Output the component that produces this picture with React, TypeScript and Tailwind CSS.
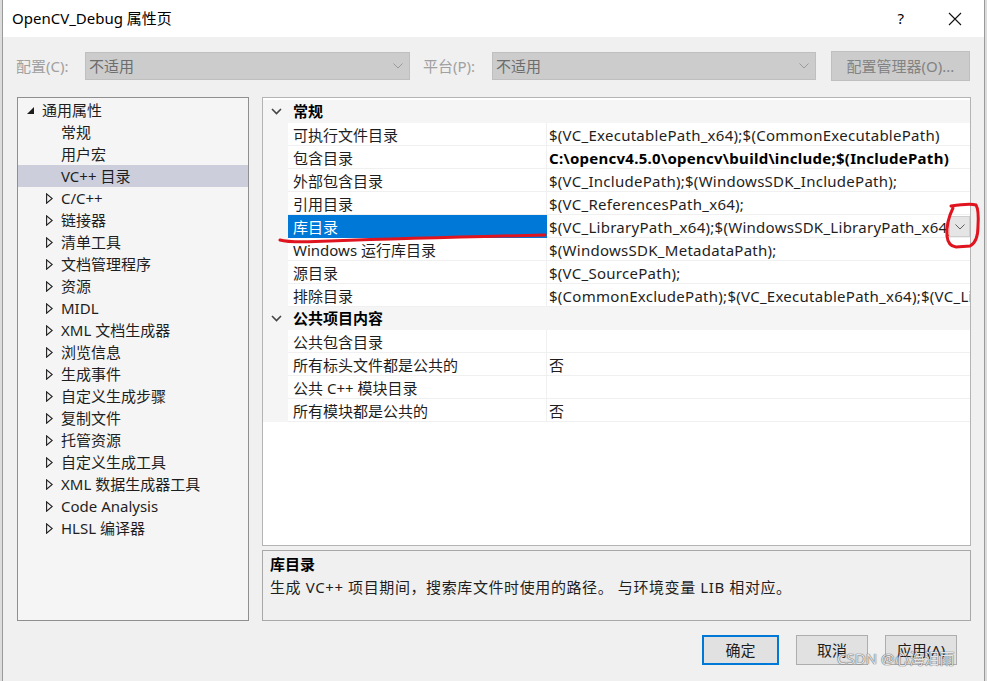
import React from "react";

const FONT = '"Noto Sans", "Noto Sans CJK SC", sans-serif';

type Prop = { name: string; value: string; bold?: boolean; selected?: boolean };

const general: Prop[] = [
  { name: "可执行文件目录", value: "$(VC_ExecutablePath_x64);$(CommonExecutablePath)" },
  { name: "包含目录", value: "C:\\opencv4.5.0\\opencv\\build\\include;$(IncludePath)", bold: true },
  { name: "外部包含目录", value: "$(VC_IncludePath);$(WindowsSDK_IncludePath);" },
  { name: "引用目录", value: "$(VC_ReferencesPath_x64);" },
  { name: "库目录", value: "$(VC_LibraryPath_x64);$(WindowsSDK_LibraryPath_x64)", selected: true },
  { name: "Windows 运行库目录", value: "$(WindowsSDK_MetadataPath);" },
  { name: "源目录", value: "$(VC_SourcePath);" },
  { name: "排除目录", value: "$(CommonExcludePath);$(VC_ExecutablePath_x64);$(VC_LibraryPath_x64);" },
];

const shared: Prop[] = [
  { name: "公共包含目录", value: "" },
  { name: "所有标头文件都是公共的", value: "否" },
  { name: "公共 C++ 模块目录", value: "" },
  { name: "所有模块都是公共的", value: "否" },
];

const collapsed = [
  "C/C++",
  "链接器",
  "清单工具",
  "文档管理程序",
  "资源",
  "MIDL",
  "XML 文档生成器",
  "浏览信息",
  "生成事件",
  "自定义生成步骤",
  "复制文件",
  "托管资源",
  "自定义生成工具",
  "XML 数据生成器工具",
  "Code Analysis",
  "HLSL 编译器",
];

function Chevron({ className = "", color = "#9a9a9a" }: { className?: string; color?: string }) {
  return (
    <svg width="10" height="6" viewBox="0 0 10 6" className={className}>
      <path d="M0.5 0.5 L5 5 L9.5 0.5" fill="none" stroke={color} strokeWidth="1" />
    </svg>
  );
}

function Combo({ width }: { width: string }) {
  return (
    <div className={`${width} h-[28px] bg-[#cccccc] border border-[#bfbfbf] flex items-center justify-between pl-[3px] pr-[6px]`}>
      <span className="text-[15px] text-[#6d6d6d] leading-none">不适用</span>
      <Chevron />
    </div>
  );
}

function Category({ label }: { label: string }) {
  return (
    <div className="flex h-[23px] bg-[#f5f5f5] items-center">
      <div className="w-[25px] flex justify-center pl-[2px]">
        <svg width="11" height="7" viewBox="0 0 11 7">
          <path d="M1 1 L5.5 5.5 L10 1" fill="none" stroke="#444" strokeWidth="1.6" />
        </svg>
      </div>
      <span className="pl-[5px] text-[15px] font-bold text-black leading-none">{label}</span>
    </div>
  );
}

function Row({ p }: { p: Prop }) {
  return (
    <div className="flex h-[23px]">
      <div className="w-[25px] shrink-0 bg-[#f5f5f5]" />
      <div
        className={`w-[259px] shrink-0 flex items-center pl-[5px] pt-[2px] border-b border-r ${
          p.selected ? "bg-[#0078d7] text-white border-[#0078d7]" : "bg-white text-[#1e1e1e] border-[#f0f0f0]"
        }`}
      >
        <span className="text-[15px] leading-none whitespace-nowrap">{p.name}</span>
      </div>
      <div className="flex-1 min-w-0 flex items-center bg-white border-b border-[#f0f0f0] pl-[2px] pt-[2px] relative overflow-hidden">
        <span
          className={`text-[15px] leading-none whitespace-nowrap tracking-[0.27px] text-[#1e1e1e] ${
            p.bold ? "font-bold text-black" : ""
          }`}
        >
          {p.value}
        </span>
        {p.selected && (
          <div className="absolute right-0 top-[1px] w-[21px] h-[21px] bg-[#e5e5e5] border border-[#cfcfcf] flex items-center justify-center">
            <Chevron color="#606060" />
          </div>
        )}
      </div>
    </div>
  );
}

function Button({ label, primary }: { label: string; primary?: boolean }) {
  return (
    <div
      className={`h-[30px] flex items-center justify-center bg-[#e1e1e1] text-[15px] text-[#1e1e1e] ${
        primary ? "w-[77px] border-2 border-[#0078d7]" : "w-[72px] border border-[#adadad]"
      }`}
    >
      {label}
    </div>
  );
}

export default function App() {
  return (
    <div className="w-[987px] h-[681px] bg-[#dcdcdc] relative overflow-hidden" style={{ fontFamily: FONT }}>
      <div className="ml-[2px] w-[983px] h-[681px] border-l border-r border-[#9a9a9a] bg-[#f0f0f0] flex flex-col">
        {/* Title bar */}
        <div className="h-[37px] bg-white flex items-center justify-between pl-[9px] pr-[22px] shrink-0">
          <span className="text-[15px] text-black leading-none">OpenCV_Debug 属性页</span>
          <div className="flex items-center gap-[44px]">
            <span className="text-[15px] text-black leading-none">?</span>
            <svg width="14" height="14" viewBox="0 0 14 14">
              <path d="M1 1 L13 13 M13 1 L1 13" stroke="#111" strokeWidth="1.1" />
            </svg>
          </div>
        </div>

        {/* Configuration row */}
        <div className="flex items-center mt-[15px] h-[28px] pl-[13px]">
          <span className="w-[69px] text-[15px] text-[#a0a0a0] leading-none">配置(C):</span>
          <Combo width="w-[325px]" />
          <span className="ml-[13px] w-[69px] text-[15px] text-[#a0a0a0] leading-none">平台(P):</span>
          <Combo width="w-[324px]" />
          <div className="ml-[15px] w-[139px] h-[30px] bg-[#cccccc] border border-[#bfbfbf] flex items-center justify-center text-[15px] text-[#838383]">
            配置管理器(O)...
          </div>
        </div>

        {/* Main area */}
        <div className="flex mt-[17px] pl-[14px]">
          {/* Tree */}
          <div className="w-[232px] h-[524px] bg-[#f5f5f5] border border-[#8f8f8f] pt-[1px] flex flex-col">
            <div className="h-[22px] flex items-center pl-[9px]">
              <svg width="7" height="7" viewBox="0 0 7 7">
                <path d="M7 0 L7 7 L0 7 Z" fill="#1e1e1e" />
              </svg>
              <span className="ml-[8px] text-[15px] text-[#1e1e1e] leading-none">通用属性</span>
            </div>
            {["常规", "用户宏", "VC++ 目录"].map((c) => (
              <div key={c} className={`h-[22px] flex items-center pl-[43px] ${c === "VC++ 目录" ? "bg-[#cccedb]" : ""}`}>
                <span className="text-[15px] text-[#1e1e1e] leading-none">{c}</span>
              </div>
            ))}
            {collapsed.map((c) => (
              <div key={c} className="h-[22px] flex items-center pl-[28px]">
                <svg width="7" height="11" viewBox="0 0 7 11">
                  <path d="M0.6 0.8 L6.2 5.5 L0.6 10.2 Z" fill="none" stroke="#1e1e1e" strokeWidth="1.1" />
                </svg>
                <span className="ml-[8px] text-[15px] text-[#1e1e1e] leading-none whitespace-nowrap">{c}</span>
              </div>
            ))}
          </div>

          {/* Right column */}
          <div className="ml-[13px] w-[709px] flex flex-col">
            <div className="h-[449px] bg-white border border-[#b4b4b4] pt-[2px] flex flex-col overflow-hidden">
              <Category label="常规" />
              {general.map((p) => (
                <Row key={p.name} p={p} />
              ))}
              <Category label="公共项目内容" />
              {shared.map((p) => (
                <Row key={p.name} p={p} />
              ))}
            </div>
            <div className="mt-[4px] h-[71px] border border-[#a8a8a8] bg-[#f0f0f0] px-[7px] pt-[4px] flex flex-col gap-[5px]">
              <span className="text-[15px] font-bold text-black leading-[18px]">库目录</span>
              <span className="text-[15px] text-[#1e1e1e] leading-[18px] tracking-[0.6px]">
                生成 VC++ 项目期间，搜索库文件时使用的路径。 与环境变量 LIB 相对应。
              </span>
            </div>
          </div>
        </div>

        {/* Buttons */}
        <div className="flex justify-end gap-[17px] mt-[14px] pr-[27px]">
          <Button label="确定" primary />
          <Button label="取消" />
          <Button label="应用(A)" />
        </div>
      </div>

      {/* Red hand-drawn annotations */}
      <svg className="absolute left-0 top-0 pointer-events-none" width="987" height="681" viewBox="0 0 987 681">
        <path
          d="M280 240 Q290 243 330 241 Q420 238 545 235"
          fill="none"
          stroke="#e0141e"
          strokeWidth="3"
          strokeLinecap="round"
        />
        <path
          d="M953 208 Q946 222 947 236 Q948 246 956 247 L970 246 Q978 242 978 226 Q979 210 976 205 Q970 203 951 206"
          fill="none"
          stroke="#e0141e"
          strokeWidth="3"
          strokeLinecap="round"
        />
      </svg>

      {/* Watermark */}
      <div className="absolute left-[837px] top-[651px] text-[15px] text-[#e6e6e6] leading-none whitespace-nowrap [text-shadow:0_0_1px_#555,0_0_1px_#555]">
        CSDN @心海泪雨
      </div>
    </div>
  );
}
